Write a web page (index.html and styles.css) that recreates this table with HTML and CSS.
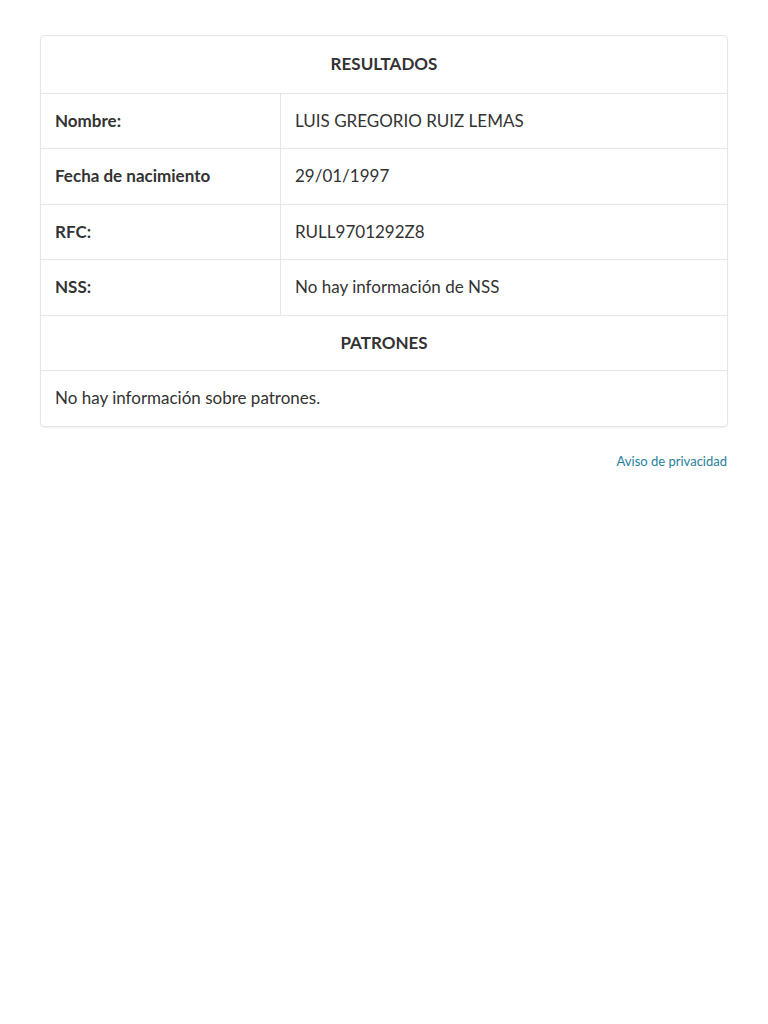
FILE: index.html
```html
<!DOCTYPE html>
<html lang="es">
<head>
<meta charset="utf-8">
<title>Resultados</title>
<link rel="stylesheet" href="styles.css">
</head>
<body>
<main class="page">
  <div class="card">
    <table class="results">
      <tr><th colspan="2" class="section">RESULTADOS</th></tr>
      <tr><th class="label">Nombre:</th><td>LUIS GREGORIO RUIZ LEMAS</td></tr>
      <tr><th class="label">Fecha de nacimiento</th><td>29/01/1997</td></tr>
      <tr><th class="label">RFC:</th><td>RULL9701292Z8</td></tr>
      <tr><th class="label">NSS:</th><td>No hay información de NSS</td></tr>
      <tr><th colspan="2" class="section">PATRONES</th></tr>
      <tr><td colspan="2">No hay información sobre patrones.</td></tr>
    </table>
  </div>
  <div class="footer"><a href="#" class="privacy">Aviso de privacidad</a></div>
</main>
</body>
</html>
```
FILE: styles.css
```css
html, body { margin: 0; padding: 0; background: #fff; }
body { font-family: Lato, "Open Sans", sans-serif; color: #333; font-size: 17px; }
.page { padding: 35px 40px 0 40px; }
.card {
  border: 1px solid #e6e6e6;
  border-radius: 4px;
  box-shadow: 0 1px 2px rgba(0,0,0,0.06);
  overflow: hidden;
}
.results { width: 100%; border-collapse: collapse; }
.results th, .results td {
  padding: 15px 14px;
  line-height: 24.5px;
  text-align: left;
  border-top: 1px solid #e6e6e6;
  font-weight: 400;
  vertical-align: middle;
}
.results tr:first-child th { border-top: none; padding-top: 16px; padding-bottom: 16px; }
.results th.section { text-align: center; font-weight: 700; }
.results th.label { font-weight: 700; width: 211px; border-right: 1px solid #e6e6e6; }
.footer { display: flex; justify-content: flex-end; padding-top: 26px; padding-right: 1px; }
.privacy { color: #26809c; text-decoration: none; font-size: 13px; }
```
